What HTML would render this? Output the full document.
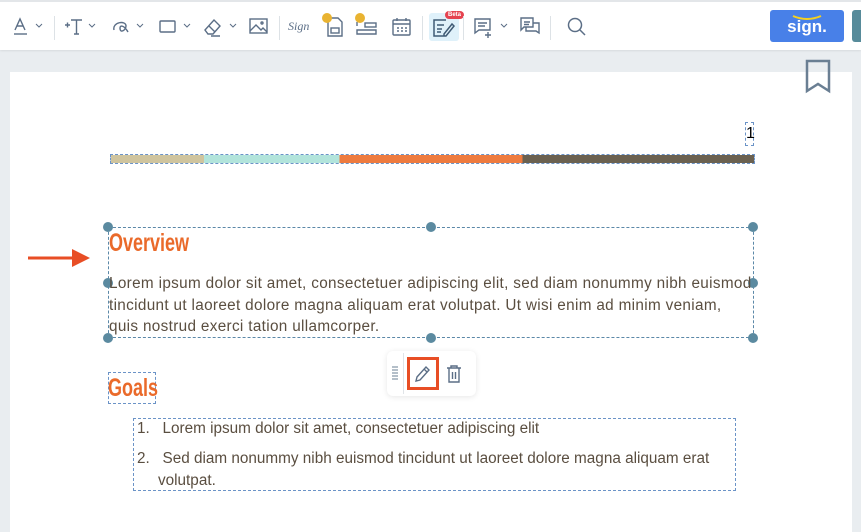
<!DOCTYPE html>
<html><head><meta charset="utf-8"><style>
*{margin:0;padding:0;box-sizing:border-box}
body{width:861px;height:522px;overflow:hidden;background:#e9edf0;font-family:"Liberation Sans",sans-serif;position:relative}
.tb{position:absolute;left:0;top:0;width:861px;height:50px;background:#fff;border-top:2px solid #e3e6e9;box-shadow:0 1px 2px rgba(0,0,0,.08)}
.ic{position:absolute;top:14px}
.sep{position:absolute;top:14px;width:1px;height:24px;background:#dde2e6}
.page{position:absolute;left:10px;top:72px;width:842px;height:460px;background:#fff}
.ab{position:absolute}
.h{width:10px;height:10px;border-radius:50%;background:#5b8aa0;position:absolute}
.txt{position:absolute;left:109px;color:#5a4e40;font-size:15.3px;white-space:nowrap;letter-spacing:0.33px}
.or{color:#ea6a2a;font-weight:bold;transform-origin:0 0;transform:scaleX(0.72)}
</style></head><body>
<div class="tb">
<svg class="ic" style="left:12px" width="32" height="22" viewBox="0 0 32 22" fill="none" stroke="#5b6e86" stroke-width="1.4"><path d="M3 14 L8 3 L13 14 M5 10 H11"/><path d="M2 18 H15"/><path d="M24 8 l3 3 l3-3" stroke-width="1"/></svg>
<div class="sep" style="left:54px"></div>
<svg class="ic" style="left:64px" width="34" height="22" viewBox="0 0 34 22" fill="none" stroke="#5b6e86" stroke-width="1.4"><path d="M1 9 h5 M3.5 6.5 v5 M7 4 H18 M12.5 4 V18 M10 18 h5"/><path d="M25 8 l3 3 l3-3" stroke-width="1"/></svg>
<svg class="ic" style="left:110px" width="36" height="22" viewBox="0 0 36 22" fill="none" stroke="#5b6e86" stroke-width="1.4"><path d="M4 14 C2 6 16 4 16 10 C16 14 10 18 10 12 C10 9 14 9 18 16"/><path d="M27 8 l3 3 l3-3" stroke-width="1"/></svg>
<svg class="ic" style="left:158px" width="36" height="22" viewBox="0 0 36 22" fill="none" stroke="#5b6e86" stroke-width="1.4"><rect x="2" y="5" width="15" height="11" rx="1"/><path d="M26 8 l3 3 l3-3" stroke-width="1"/></svg>
<svg class="ic" style="left:202px" width="38" height="22" viewBox="0 0 38 22" fill="none" stroke="#5b6e86" stroke-width="1.4"><path d="M3 14 L12 4 L18 10 L11 18 H6 Z M7 10 L13 16 M9 20 H18"/><path d="M28 8 l3 3 l3-3" stroke-width="1"/></svg>
<svg class="ic" style="left:249px" width="20" height="22" viewBox="0 0 20 22" fill="none" stroke="#5b6e86" stroke-width="1.4"><rect x="1" y="3" width="17" height="14"/><path d="M1 15 L7 9 L12 14 L14 12 L18 16"/><circle cx="13" cy="7" r="1"/></svg>
<div class="sep" style="left:279px"></div>
<div class="ic" style="left:288px;top:17px;font-style:italic;font-family:'Liberation Serif',serif;font-size:12px;color:#5b6e86">Sign</div>
<svg class="ic" style="left:320px;top:10px" width="26" height="26" viewBox="0 0 26 26" fill="none" stroke="#5b6e86" stroke-width="1.4"><path d="M8 6 H18 L22 10 V24 H8 Z"/><rect x="11" y="16" width="8" height="5"/><circle cx="7" cy="6" r="5" fill="#e9b331" stroke="none"/></svg>
<svg class="ic" style="left:353px;top:10px" width="26" height="26" viewBox="0 0 26 26" fill="none" stroke="#5b6e86" stroke-width="1.4"><rect x="12" y="11" width="11" height="4"/><path d="M4 18 H23 V22 H4 Z M4 14 V10"/><circle cx="7" cy="6" r="5" fill="#e9b331" stroke="none"/></svg>
<svg class="ic" style="left:391px" width="22" height="22" viewBox="0 0 22 22" fill="none" stroke="#5b6e86" stroke-width="1.4"><rect x="2" y="4" width="17" height="15" rx="1"/><path d="M2 8 H19 M6 2 V5 M15 2 V5 M6 12 h2 M10 12 h2 M14 12 h2 M6 15 h2 M10 15 h2 M14 15 h2"/></svg>
<div class="sep" style="left:422px"></div>
<div class="ab" style="left:429px;top:11px;width:30px;height:28px;background:#dff1fa;border-radius:3px"></div>
<svg class="ic" style="left:432px;top:15px" width="24" height="22" viewBox="0 0 24 22" fill="none" stroke="#3f5a74" stroke-width="1.5"><path d="M14 3 H2 V19 H12 M5 8 H12 M5 12 H10 M5 15 h4 M12 17 L20 7 L22 9 L14 19 L12 19 Z"/></svg>
<div class="ab" style="left:445px;top:9px;background:#e5424f;color:#fff;font-size:6px;font-weight:bold;border-radius:5px;padding:1px 3px">Beta</div>
<div class="sep" style="left:463px"></div>
<svg class="ic" style="left:473px" width="36" height="24" viewBox="0 0 36 24" fill="none" stroke="#5b6e86" stroke-width="1.4"><path d="M2 3 H17 V14 H6 L2 17 Z M5 7 H14 M5 10 H12 M15 16 V22 M12 19 H18"/><path d="M28 8 l3 3 l3-3" stroke-width="1"/></svg>
<svg class="ic" style="left:519px" width="24" height="22" viewBox="0 0 24 22" fill="none" stroke="#5b6e86" stroke-width="1.4"><path d="M2 2 H14 V11 H5 L2 14 Z M5 6 H11 M5 8.5 H10 M14 7 H20 V17 L17 15 H7 V11"/></svg>
<div class="sep" style="left:550px"></div>
<svg class="ic" style="left:566px" width="22" height="22" viewBox="0 0 22 22" fill="none" stroke="#5b6e86" stroke-width="1.5"><circle cx="9" cy="9" r="6.5"/><path d="M14 14 L19 19"/></svg>
<div class="ab" style="left:770px;top:8px;width:74px;height:32px;background:#4880e8;border-radius:3px;color:#fff;font-weight:bold;font-size:17px;text-align:center;line-height:34px">sign.</div>
<svg class="ab" style="left:790px;top:13px" width="34" height="6" viewBox="0 0 34 6"><path d="M3 1 Q17 7 31 1" stroke="#f5d020" stroke-width="2" fill="none"/></svg>
<div class="ab" style="left:852px;top:8px;width:12px;height:32px;background:#578b9a;border-radius:3px"></div>
</div>
<div class="page"></div>
<svg class="ab" style="left:804px;top:59px" width="30" height="36" viewBox="0 0 30 36" fill="none" stroke="#6a7f93" stroke-width="2.5"><path d="M3 2 H25 V32 L14 25 L3 32 Z"/></svg>
<div class="ab" style="left:745px;top:122px;width:9px;height:24px;border:1px dashed #6b93c7;font-size:16px;line-height:22px;color:#000">1</div>
<div class="ab" style="left:111px;top:155px;width:643px;height:8px;background:linear-gradient(90deg,#cfc49e 0 14.5%,#b2e4db 14.5% 35.5%,#ee7b3f 35.5% 64%,#6b6150 64%)"></div>
<div class="ab" style="left:110px;top:154px;width:645px;height:10px;border:1px dashed #6b93c7"></div>
<svg class="ab" style="left:28px;top:247px" width="64" height="22"><path d="M0 11 H48" stroke="#e84e25" stroke-width="3"/><path d="M44 2 L62 11 L44 20 Z" fill="#e84e25"/></svg>
<div class="ab" style="left:108px;top:227px;width:646px;height:111px;border:1.5px dashed #5b88a8"></div>
<div class="h" style="left:103px;top:222px"></div><div class="h" style="left:426px;top:222px"></div><div class="h" style="left:748px;top:222px"></div>
<div class="h" style="left:103px;top:278px"></div><div class="h" style="left:748px;top:278px"></div>
<div class="h" style="left:103px;top:333px"></div><div class="h" style="left:426px;top:333px"></div><div class="h" style="left:748px;top:333px"></div>
<div class="ab or" style="left:109px;top:229px;font-size:25px">Overview</div>
<div class="txt" style="top:275px">Lorem ipsum dolor sit amet, consectetuer adipiscing elit, sed diam nonummy nibh euismod</div>
<div class="txt" style="top:297px">tincidunt ut laoreet dolore magna aliquam erat volutpat. Ut wisi enim ad minim veniam,</div>
<div class="txt" style="top:318px">quis nostrud exerci tation ullamcorper.</div>
<div class="ab" style="left:387px;top:351px;width:89px;height:45px;background:#fff;border-radius:6px;box-shadow:0 1px 6px rgba(0,0,0,.1)"></div>
<div class="ab" style="left:403px;top:353px;width:1px;height:41px;background:#e0e4e8"></div>
<svg class="ab" style="left:391px;top:366px" width="8" height="16"><path d="M1 1 H7 M1 4 H7 M1 7 H7 M1 10 H7 M1 13 H7" stroke="#6a7f93" stroke-width="1"/></svg>
<div class="ab" style="left:407px;top:357px;width:32px;height:33px;border:3px solid #e84e25"></div>
<svg class="ab" style="left:413px;top:364px" width="20" height="20" viewBox="0 0 20 20" fill="none" stroke="#5b6e86" stroke-width="1.4"><path d="M3 17 L4 13 L13 3 L16 6 L7 16 Z M11 5 L14 8"/></svg>
<svg class="ab" style="left:445px;top:364px" width="18" height="20" viewBox="0 0 18 20" fill="none" stroke="#5b6e86" stroke-width="1.4"><path d="M2 4 H16 M6 4 V2 H12 V4 M4 4 V18 H14 V4 M7.5 8 V15 M10.5 8 V15"/></svg>
<div class="ab" style="left:108px;top:372px;width:48px;height:32px;border:1.5px dashed #6b93c7"></div>
<div class="ab or" style="left:108px;top:374px;font-size:25px">Goals</div>
<div class="ab" style="left:133px;top:418px;width:603px;height:73px;border:1.5px dashed #6b93c7"></div>
<div class="txt" style="left:137px;top:420px;letter-spacing:0">1.&nbsp;&nbsp;&nbsp;Lorem ipsum dolor sit amet, consectetuer adipiscing elit</div>
<div class="txt" style="left:137px;top:450px;letter-spacing:0">2.&nbsp;&nbsp;&nbsp;Sed diam nonummy nibh euismod tincidunt ut laoreet dolore magna aliquam erat</div>
<div class="txt" style="left:158px;top:472px;letter-spacing:0">volutpat.</div>
</body></html>
